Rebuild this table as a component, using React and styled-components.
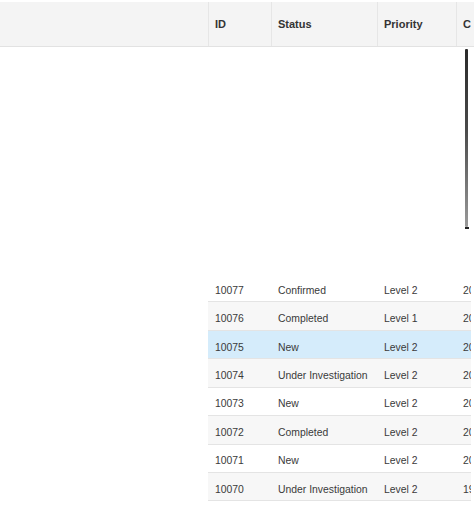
import React from 'react';
import styled, { createGlobalStyle } from 'styled-components';

const GlobalStyle = createGlobalStyle`
  body {
    margin: 0;
    background: #fff;
    font-family: "Liberation Sans", Arial, sans-serif;
  }
`;

const columns = [
  { key: 'id', label: 'ID', width: 63 },
  { key: 'status', label: 'Status', width: 106 },
  { key: 'priority', label: 'Priority', width: 79 },
  { key: 'created', label: 'Created', width: 120 },
];

const rows = [
  { id: 10077, status: 'Confirmed', priority: 'Level 2', created: '2021-03-02' },
  { id: 10076, status: 'Completed', priority: 'Level 1', created: '2021-02-27' },
  { id: 10075, status: 'New', priority: 'Level 2', created: '2021-02-21' },
  { id: 10074, status: 'Under Investigation', priority: 'Level 2', created: '2021-02-18' },
  { id: 10073, status: 'New', priority: 'Level 2', created: '2020-12-30' },
  { id: 10072, status: 'Completed', priority: 'Level 2', created: '2020-11-14' },
  { id: 10071, status: 'New', priority: 'Level 2', created: '2020-10-09' },
  { id: 10070, status: 'Under Investigation', priority: 'Level 2', created: '1999-08-01' },
];

const Page = styled.div`
  position: relative;
  width: 474px;
  height: 521px;
  overflow: hidden;
  padding-top: 2px;
  box-sizing: border-box;
`;

const HeaderBar = styled.div`
  height: 45px;
  background: #f4f4f4;
  border-bottom: 1px solid #e2e2e2;
  box-sizing: border-box;
  padding-left: 208px;
`;

const HeaderClip = styled.div`
  display: flex;
  width: 263px;
  height: 100%;
  overflow: hidden;
`;

const HeaderCell = styled.div`
  flex: 0 0 ${p => p.$w}px;
  display: flex;
  align-items: center;
  padding-left: 6px;
  border-left: 1px solid #e6e6e6;
  box-sizing: border-box;
  font-size: 11px;
  font-weight: bold;
  color: #333;
  white-space: nowrap;
`;

const Body = styled.div`
  padding-top: 227px;
  padding-left: 208px;
`;

const RowsClip = styled.div`
  width: 263px;
  overflow: hidden;
`;

const Row = styled.div`
  display: flex;
  height: 28.43px;
  box-sizing: border-box;
  border-bottom: 1px solid #e4e4e4;
  background: ${p => (p.$selected ? '#d5ecfb' : p.$odd ? '#f7f7f7' : '#fff')};
`;

const Cell = styled.div`
  flex: 0 0 ${p => p.$w}px;
  display: flex;
  align-items: center;
  padding: 5px 0 0 7px;
  box-sizing: border-box;
  font-size: 10.4px;
  color: #3a3a3a;
  white-space: nowrap;
`;

const ScrollThumb = styled.div`
  position: absolute;
  left: 465px;
  top: 49px;
  width: 3px;
  height: 178px;
  background: linear-gradient(to bottom, #2a2a2a, #4a4a4a 45%, #9a9a9a);
  border-radius: 1px;

  &::after {
    content: '';
    position: absolute;
    left: -0.5px;
    bottom: -2px;
    width: 4px;
    height: 2px;
    background: #222;
  }
`;

export default function App() {
  return (
    <>
      <GlobalStyle />
      <Page>
        <HeaderBar>
          <HeaderClip>
            {columns.map(c => (
              <HeaderCell key={c.key} $w={c.width}>{c.label}</HeaderCell>
            ))}
          </HeaderClip>
        </HeaderBar>
        <Body>
          <RowsClip>
            {rows.map((r, i) => (
              <Row key={r.id} $odd={i % 2 === 1} $selected={r.id === 10075}>
                {columns.map(c => (
                  <Cell key={c.key} $w={c.width}>{r[c.key]}</Cell>
                ))}
              </Row>
            ))}
          </RowsClip>
        </Body>
        <ScrollThumb />
      </Page>
    </>
  );
}
